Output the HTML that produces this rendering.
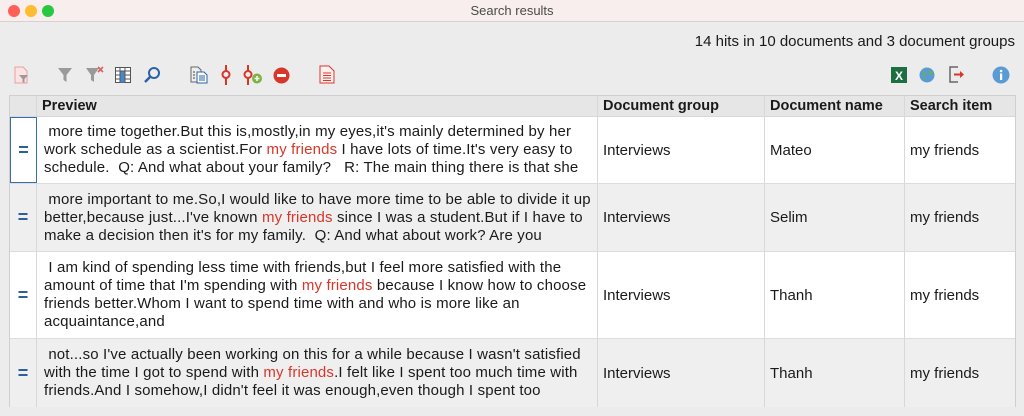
<!DOCTYPE html>
<html><head><meta charset="utf-8"><style>
*{margin:0;padding:0;box-sizing:border-box}
body{width:1024px;height:416px;background:#ececec;font-family:"Liberation Sans",Arial,sans-serif;position:relative;overflow:hidden;color:#1a1a1a}
.tb{position:absolute;left:0;top:0;width:1024px;height:22px;background:#f7eeed;border-bottom:1px solid #d6d0cf;text-align:center;font-size:13px;line-height:22px;color:#4a4a4a}
.dot{position:absolute;top:5px;width:12px;height:12px;border-radius:6px}
.hits{position:absolute;right:9px;top:33px;font-size:15px;color:#1a1a1a}
svg.i{position:absolute}
.tbl{position:absolute;left:9px;top:95px;width:1007px;height:312px;border:1px solid #cfcfcf;background:#f5f5f5}
.c{position:absolute;border-right:1px solid #d8d8d8;font-size:15px}
.h{top:0;height:21px;background:#e6e6e6;font-weight:bold;line-height:21px;padding-left:5px;border-bottom:1px solid #d8d8d8;font-size:14.5px}
.r{position:absolute;left:0;width:1005px}
.r .c{height:100%}
.pv{padding:0 0 0 7px;line-height:18px;white-space:nowrap;letter-spacing:.15px;overflow:hidden;display:flex;align-items:center}
.mid{display:flex;align-items:center;padding-left:5px}
.eq{color:#2f5f9a;font-weight:bold;font-size:18px;justify-content:center;padding-left:0}
.f{color:#d9362a}
</style></head><body>
<div class="tb">Search results
<div class="dot" style="left:8px;background:#fe5f57"></div>
<div class="dot" style="left:25px;background:#febc2e"></div>
<div class="dot" style="left:42px;background:#28c840"></div>
</div>
<div class="hits">14 hits in 10 documents and 3 document groups</div>

<svg class="i" style="left:13px;top:66px" width="18" height="18" viewBox="0 0 18 18"><path d="M2 1h8l4 4v12H2z" fill="#fbe3e3" stroke="#e8a0a0"/><path d="M6 9h9l-3.5 4v4l-2-1v-3z" fill="#9a9a9a"/></svg>
<svg class="i" style="left:58px;top:67px" width="14" height="16" viewBox="0 0 14 16"><path d="M0 1h14L8.5 8v7l-3-2V8z" fill="#9a9a9a"/></svg>
<svg class="i" style="left:86px;top:66px" width="18" height="17" viewBox="0 0 18 17"><path d="M0 2h13L8 9v7l-3-2V9z" fill="#9a9a9a"/><path d="M12 1l5 5M17 1l-5 5" stroke="#e06060" stroke-width="1.6"/></svg>
<svg class="i" style="left:115px;top:67px" width="16" height="16" viewBox="0 0 16 16"><rect x=".5" y=".5" width="15" height="15" fill="#fff" stroke="#555"/><path d="M0 4h16M0 8h16M0 12h16M5 0v16M10 0v16" stroke="#555"/><rect x="5.5" y="4.5" width="4" height="11" fill="#4a86c8"/></svg>
<svg class="i" style="left:143px;top:66px" width="18" height="18" viewBox="0 0 18 18"><circle cx="11" cy="7" r="5" fill="none" stroke="#2a62a8" stroke-width="2"/><path d="M7.5 10.5L2 16" stroke="#2a62a8" stroke-width="2.5"/></svg>
<svg class="i" style="left:190px;top:66px" width="18" height="18" viewBox="0 0 18 18"><path d="M1 1h7l3 3v12H1z" fill="#eee" stroke="#666"/><path d="M7 6h7l3 3v8H7z" fill="#fff" stroke="#2a62a8"/><path d="M9 10h6M9 12h6M9 14h6" stroke="#2a62a8"/><path d="M3 6h2M3 9h2M3 12h2" stroke="#444"/></svg>
<svg class="i" style="left:219px;top:65px" width="14" height="20" viewBox="0 0 14 20"><path d="M7 0v6M7 13v7" stroke="#d9362a" stroke-width="2"/><circle cx="7" cy="9.5" r="3.5" fill="none" stroke="#d9362a" stroke-width="2"/></svg>
<svg class="i" style="left:243px;top:65px" width="20" height="20" viewBox="0 0 20 20"><path d="M5 0v6M5 13v7" stroke="#d9362a" stroke-width="2"/><circle cx="5" cy="9.5" r="3.5" fill="none" stroke="#d9362a" stroke-width="2"/><circle cx="14" cy="13.5" r="5" fill="#7cb342"/><path d="M14 11v5M11.5 13.5h5" stroke="#fff" stroke-width="1.5"/></svg>
<svg class="i" style="left:273px;top:67px" width="17" height="17" viewBox="0 0 17 17"><circle cx="8.5" cy="8.5" r="8" fill="#d9362a"/><rect x="4" y="7" width="9" height="3" fill="#fff"/></svg>
<svg class="i" style="left:319px;top:65px" width="16" height="19" viewBox="0 0 16 19"><path d="M1 1h9l5 5v12H1z" fill="#fdf0ef" stroke="#d9362a"/><path d="M4 8h8M4 10.5h8M4 13h8M4 15.5h8" stroke="#d9362a"/></svg>
<svg class="i" style="left:891px;top:67px" width="16" height="16" viewBox="0 0 16 16"><rect width="16" height="16" fill="#1d6f42"/><text x="8" y="13" font-size="12" font-weight="bold" fill="#fff" text-anchor="middle" font-family="Liberation Sans">X</text></svg>
<svg class="i" style="left:919px;top:67px" width="16" height="16" viewBox="0 0 16 16"><circle cx="8" cy="8" r="7.5" fill="#5b9bd5"/><path d="M3 4c3 0 4 2 3 4s1 3 0 6M9 2c1 2 4 2 5 4l-2 3z" fill="#6ab04c"/></svg>
<svg class="i" style="left:949px;top:66px" width="17" height="17" viewBox="0 0 17 17"><path d="M9 1H1v15h8" fill="none" stroke="#666" stroke-width="1.5"/><path d="M5 8.5h8" stroke="#d9362a" stroke-width="2"/><path d="M11 5l4 3.5-4 3.5z" fill="#d9362a"/></svg>
<svg class="i" style="left:992px;top:66px" width="18" height="18" viewBox="0 0 18 18"><circle cx="9" cy="9" r="8.5" fill="#5b9bd5"/><rect x="8" y="7.5" width="2.2" height="6.5" fill="#fff"/><circle cx="9.1" cy="5" r="1.3" fill="#fff"/></svg>

<div class="tbl">
<div class="c h" style="left:0;width:27px"></div>
<div class="c h" style="left:27px;width:561px">Preview</div>
<div class="c h" style="left:588px;width:167px">Document group</div>
<div class="c h" style="left:755px;width:140px">Document name</div>
<div class="c h" style="left:895px;width:110px;border-right:none">Search item</div>

<div class="r" style="top:21px;height:67px;background:#fff;border-bottom:1px solid #dcdcdc">
<div class="c mid eq" style="left:0;width:27px;border:1px solid #3a6ea8;background:#fff">=</div>
<div class="c pv" style="left:27px;width:561px"><div>&nbsp;more time together.But this is,mostly,in my eyes,it's mainly determined by her<br>work schedule as a scientist.For <span class="f">my friends</span> I have lots of time.It's very easy to<br>schedule.&nbsp; Q: And what about your family?&nbsp;&nbsp; R: The main thing there is that she</div></div>
<div class="c mid" style="left:588px;width:167px">Interviews</div>
<div class="c mid" style="left:755px;width:140px">Mateo</div>
<div class="c mid" style="left:895px;width:110px;border-right:none">my friends</div>
</div>

<div class="r" style="top:88px;height:68px;background:#efefef;border-bottom:1px solid #dcdcdc">
<div class="c mid eq" style="left:0;width:27px">=</div>
<div class="c pv" style="left:27px;width:561px"><div>&nbsp;more important to me.So,I would like to have more time to be able to divide it up<br>better,because just...I've known <span class="f">my friends</span> since I was a student.But if I have to<br>make a decision then it's for my family.&nbsp; Q: And what about work? Are you</div></div>
<div class="c mid" style="left:588px;width:167px">Interviews</div>
<div class="c mid" style="left:755px;width:140px">Selim</div>
<div class="c mid" style="left:895px;width:110px;border-right:none">my friends</div>
</div>

<div class="r" style="top:156px;height:87px;background:#fff;border-bottom:1px solid #dcdcdc">
<div class="c mid eq" style="left:0;width:27px">=</div>
<div class="c pv" style="left:27px;width:561px"><div>&nbsp;I am kind of spending less time with friends,but I feel more satisfied with the<br>amount of time that I'm spending with <span class="f">my friends</span> because I know how to choose<br>friends better.Whom I want to spend time with and who is more like an<br>acquaintance,and</div></div>
<div class="c mid" style="left:588px;width:167px">Interviews</div>
<div class="c mid" style="left:755px;width:140px">Thanh</div>
<div class="c mid" style="left:895px;width:110px;border-right:none">my friends</div>
</div>

<div class="r" style="top:243px;height:68px;background:#efefef">
<div class="c mid eq" style="left:0;width:27px">=</div>
<div class="c pv" style="left:27px;width:561px"><div>&nbsp;not...so I've actually been working on this for a while because I wasn't satisfied<br>with the time I got to spend with <span class="f">my friends</span>.I felt like I spent too much time with<br>friends.And I somehow,I didn't feel it was enough,even though I spent too</div></div>
<div class="c mid" style="left:588px;width:167px">Interviews</div>
<div class="c mid" style="left:755px;width:140px">Thanh</div>
<div class="c mid" style="left:895px;width:110px;border-right:none">my friends</div>
</div>
</div>
</body></html>
